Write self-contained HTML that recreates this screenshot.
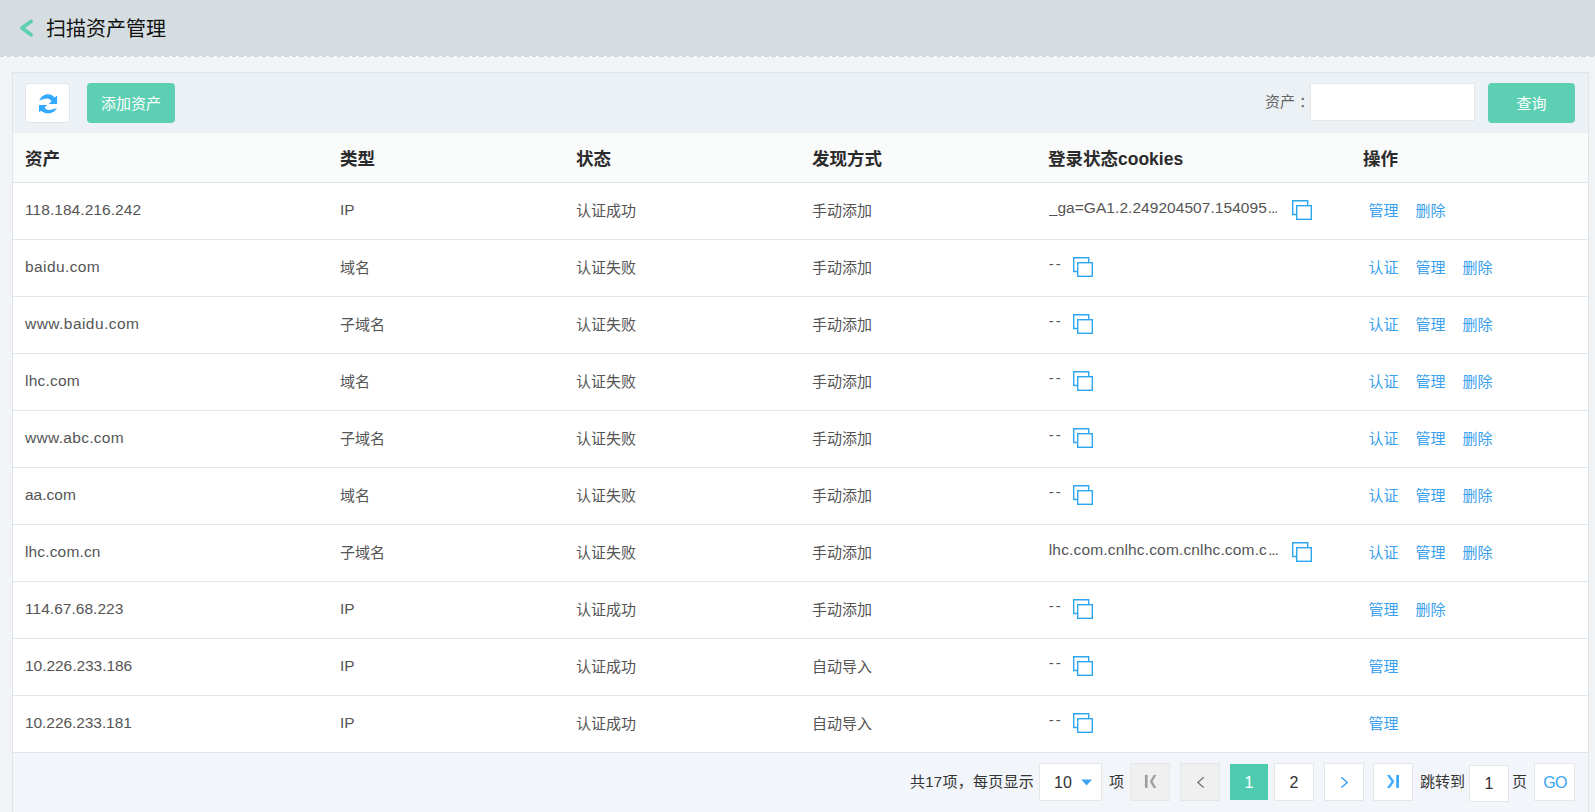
<!DOCTYPE html>
<html lang="zh-CN">
<head>
<meta charset="utf-8">
<title>扫描资产管理</title>
<style>
*{box-sizing:border-box;margin:0;padding:0}
html,body{width:1595px;height:812px;overflow:hidden}
body{background:#f2f3f5;font-family:"Liberation Sans","Noto Sans CJK SC",sans-serif;font-size:14px;color:#555;position:relative}
.hdr{position:absolute;left:0;top:0;width:1595px;height:56px;background:#d6dde1}
.dash{position:absolute;left:-1.5px;top:56px;width:1600px;height:1px;background:repeating-linear-gradient(90deg,#cbd5df 0,#cbd5df 4.8px,#f8f9fa 4.8px,#f8f9fa 7.5px)}
.hdr svg{position:absolute;left:19px;top:18px}
.hdr h1{position:absolute;left:46px;top:14px;font-size:20px;line-height:30px;font-weight:400;color:#111}
.panel{position:absolute;left:12px;top:72px;width:1577px;height:760px;border:1px solid #dfe4ea;background:#f2f5f9}
.tool{position:absolute;left:0;top:0;width:1575px;height:60px;background:#ecf1f6}
.btn-ref{position:absolute;left:12px;top:10px;width:45px;height:40px;background:#fff;border:1px solid #dfe5eb;border-radius:4px}
.btn-ref svg{position:absolute;left:0;top:0}
.btn-add{position:absolute;left:74px;top:10px;width:88px;height:40px;background:#5dd0b3;border-radius:4px;color:#fff;font-size:15px;line-height:42px;text-align:center}
.lbl{position:absolute;left:1252px;top:19px;font-size:15px;line-height:20px;color:#666}
.lbl span{position:relative;left:4px}
.inp{position:absolute;left:1297px;top:10px;width:165px;height:38px;background:#fff;border:1px solid #e6e6e6}
.btn-q{position:absolute;left:1475px;top:10px;width:87px;height:40px;background:#5dd0b3;border-radius:4px;color:#fff;font-size:15px;line-height:42px;text-align:center}
table{position:absolute;left:0;top:60px;width:1575px;border-collapse:collapse;table-layout:fixed;background:#fff}
th{height:49px;background:#f9fafa;border-bottom:1px solid #dfe6ec;text-align:left;padding-left:12px;font-size:17.5px;font-weight:700;color:#2b2b2b}
td{height:57px;border-bottom:1px solid #dfe6ec;padding-left:12px;padding-bottom:2px;font-size:15px;color:#555;white-space:nowrap;vertical-align:middle}
td.lt,.ck{font-size:15.5px}
.el{letter-spacing:-1.1px;margin-left:1px}
.ck{display:inline-block;vertical-align:middle;margin-left:.75px;max-width:231px;overflow:hidden;text-overflow:ellipsis;white-space:nowrap;letter-spacing:.25px;position:relative;top:-2px}
.cp{display:inline-block;vertical-align:middle;margin-left:14.5px;width:20px;height:20px;position:relative;top:0}
.cp svg{display:block}
.ck.dd{letter-spacing:1.9px;margin-right:-1.9px;top:-3px;font-size:15px}
.dd+.cp{top:.5px;margin-left:12.3px}
a{color:#39a0ed;text-decoration:none;display:inline-block;margin-left:5.5px;margin-right:11.5px}
.pg{position:absolute;left:0;top:680px;width:1575px;height:80px;background:#f2f5f9;font-size:15px;color:#333}
.pg span,.pg div{position:absolute}
.pg .t{top:19px;line-height:20px}
.bx{top:10px;height:38px;width:40px;border:1px solid #e6e6e6;background:#fff;text-align:center;line-height:38px;font-size:16px;color:#333}
.bx.dis{background:#f0f0f0;border-color:#e6e6e6}
.bx.on{background:#4fccb0;border-color:#4fccb0;color:#fff}
.bx svg{position:absolute;left:0;top:0}
</style>
</head>
<body>
<div class="hdr">
  <svg width="16" height="20" viewBox="0 0 16 20"><path d="M12 3.4 L3 10.1 L12 16.8" fill="none" stroke="#5dd0b3" stroke-width="3.8" stroke-linecap="round" stroke-linejoin="round"/></svg>
  <h1>扫描资产管理</h1>
</div>
<div class="dash"></div>
<div class="panel">
  <div class="tool">
    <div class="btn-ref"><svg width="43" height="38" viewBox="26 84 43 38"><g fill="#33aaff"><path id="rf" d="M39.2 100.6 C40.8 96.6 44.3 94.2 47.9 94.2 C50.6 94.2 53 95.4 54.8 97.5 L57.1 95.6 L57.1 104.1 L48.7 104.1 L51.5 101.6 C50.5 99.6 49 98.4 47.4 98.4 C44.6 98.4 42 99.4 39.2 100.6 Z"/><path transform="translate(0 113.5) scale(1 .85) translate(0 -113.5) rotate(180 48.05 103.85)" d="M39.2 100.6 C40.8 96.6 44.3 94.2 47.9 94.2 C50.6 94.2 53 95.4 54.8 97.5 L57.1 95.6 L57.1 104.1 L48.7 104.1 L51.5 101.6 C50.5 99.6 49 98.4 47.4 98.4 C44.6 98.4 42 99.4 39.2 100.6 Z"/></g></svg></div>
    <div class="btn-add">添加资产</div>
    <div class="lbl">资产<span>：</span></div>
    <div class="inp"></div>
    <div class="btn-q">查询</div>
  </div>
  <table>
    <colgroup><col style="width:315px"><col style="width:236px"><col style="width:236px"><col style="width:236px"><col style="width:315px"><col style="width:237px"></colgroup>
    <thead><tr><th>资产</th><th>类型</th><th>状态</th><th>发现方式</th><th>登录状态cookies</th><th>操作</th></tr></thead>
    <tbody>
      <tr><td class="lt" style="letter-spacing:0.06px">118.184.216.242</td><td class="lt">IP</td><td>认证成功</td><td>手动添加</td><td><span class="ck" style="letter-spacing:.05px">_ga=GA1.2.249204507.154095<span class="el">...</span></span><span class="cp"><svg width="20" height="20" viewBox="0 0 20 20"><path d="M4 14.5 H0.7 V0.7 H15.7 V5" fill="none" stroke="#2ea6f0" stroke-width="1.4"/><rect x="4.7" y="5.7" width="14.6" height="13.6" fill="none" stroke="#2ea6f0" stroke-width="1.4"/></svg></span></td><td><a>管理</a><a>删除</a></td></tr>
      <tr><td class="lt" style="letter-spacing:0.4px">baidu.com</td><td>域名</td><td>认证失败</td><td>手动添加</td><td><span class="ck dd">--</span><span class="cp"><svg width="20" height="20" viewBox="0 0 20 20"><path d="M4 14.5 H0.7 V0.7 H15.7 V5" fill="none" stroke="#2ea6f0" stroke-width="1.4"/><rect x="4.7" y="5.7" width="14.6" height="13.6" fill="none" stroke="#2ea6f0" stroke-width="1.4"/></svg></span></td><td><a>认证</a><a>管理</a><a>删除</a></td></tr>
      <tr><td class="lt" style="letter-spacing:0.45px">www.baidu.com</td><td>子域名</td><td>认证失败</td><td>手动添加</td><td><span class="ck dd">--</span><span class="cp"><svg width="20" height="20" viewBox="0 0 20 20"><path d="M4 14.5 H0.7 V0.7 H15.7 V5" fill="none" stroke="#2ea6f0" stroke-width="1.4"/><rect x="4.7" y="5.7" width="14.6" height="13.6" fill="none" stroke="#2ea6f0" stroke-width="1.4"/></svg></span></td><td><a>认证</a><a>管理</a><a>删除</a></td></tr>
      <tr><td class="lt" style="letter-spacing:0.22px">lhc.com</td><td>域名</td><td>认证失败</td><td>手动添加</td><td><span class="ck dd">--</span><span class="cp"><svg width="20" height="20" viewBox="0 0 20 20"><path d="M4 14.5 H0.7 V0.7 H15.7 V5" fill="none" stroke="#2ea6f0" stroke-width="1.4"/><rect x="4.7" y="5.7" width="14.6" height="13.6" fill="none" stroke="#2ea6f0" stroke-width="1.4"/></svg></span></td><td><a>认证</a><a>管理</a><a>删除</a></td></tr>
      <tr><td class="lt" style="letter-spacing:0.31px">www.abc.com</td><td>子域名</td><td>认证失败</td><td>手动添加</td><td><span class="ck dd">--</span><span class="cp"><svg width="20" height="20" viewBox="0 0 20 20"><path d="M4 14.5 H0.7 V0.7 H15.7 V5" fill="none" stroke="#2ea6f0" stroke-width="1.4"/><rect x="4.7" y="5.7" width="14.6" height="13.6" fill="none" stroke="#2ea6f0" stroke-width="1.4"/></svg></span></td><td><a>认证</a><a>管理</a><a>删除</a></td></tr>
      <tr><td class="lt" style="letter-spacing:0px">aa.com</td><td>域名</td><td>认证失败</td><td>手动添加</td><td><span class="ck dd">--</span><span class="cp"><svg width="20" height="20" viewBox="0 0 20 20"><path d="M4 14.5 H0.7 V0.7 H15.7 V5" fill="none" stroke="#2ea6f0" stroke-width="1.4"/><rect x="4.7" y="5.7" width="14.6" height="13.6" fill="none" stroke="#2ea6f0" stroke-width="1.4"/></svg></span></td><td><a>认证</a><a>管理</a><a>删除</a></td></tr>
      <tr><td class="lt" style="letter-spacing:0.15px">lhc.com.cn</td><td>子域名</td><td>认证失败</td><td>手动添加</td><td><span class="ck" style="letter-spacing:.16px">lhc.com.cnlhc.com.cnlhc.com.c<span class="el">...</span></span><span class="cp"><svg width="20" height="20" viewBox="0 0 20 20"><path d="M4 14.5 H0.7 V0.7 H15.7 V5" fill="none" stroke="#2ea6f0" stroke-width="1.4"/><rect x="4.7" y="5.7" width="14.6" height="13.6" fill="none" stroke="#2ea6f0" stroke-width="1.4"/></svg></span></td><td><a>认证</a><a>管理</a><a>删除</a></td></tr>
      <tr><td class="lt" style="letter-spacing:0.03px">114.67.68.223</td><td class="lt">IP</td><td>认证成功</td><td>手动添加</td><td><span class="ck dd">--</span><span class="cp"><svg width="20" height="20" viewBox="0 0 20 20"><path d="M4 14.5 H0.7 V0.7 H15.7 V5" fill="none" stroke="#2ea6f0" stroke-width="1.4"/><rect x="4.7" y="5.7" width="14.6" height="13.6" fill="none" stroke="#2ea6f0" stroke-width="1.4"/></svg></span></td><td><a>管理</a><a>删除</a></td></tr>
      <tr><td class="lt" style="letter-spacing:-0.04px">10.226.233.186</td><td class="lt">IP</td><td>认证成功</td><td>自动导入</td><td><span class="ck dd">--</span><span class="cp"><svg width="20" height="20" viewBox="0 0 20 20"><path d="M4 14.5 H0.7 V0.7 H15.7 V5" fill="none" stroke="#2ea6f0" stroke-width="1.4"/><rect x="4.7" y="5.7" width="14.6" height="13.6" fill="none" stroke="#2ea6f0" stroke-width="1.4"/></svg></span></td><td><a>管理</a></td></tr>
      <tr><td class="lt" style="letter-spacing:-0.07px">10.226.233.181</td><td class="lt">IP</td><td>认证成功</td><td>自动导入</td><td><span class="ck dd">--</span><span class="cp"><svg width="20" height="20" viewBox="0 0 20 20"><path d="M4 14.5 H0.7 V0.7 H15.7 V5" fill="none" stroke="#2ea6f0" stroke-width="1.4"/><rect x="4.7" y="5.7" width="14.6" height="13.6" fill="none" stroke="#2ea6f0" stroke-width="1.4"/></svg></span></td><td><a>管理</a></td></tr>
    </tbody>
  </table>
  <div class="pg">
    <span class="t" style="left:897px;letter-spacing:.25px">共17项，每页显示</span>
    <div class="bx" style="left:1026px;width:63px;text-align:left;padding-left:14px">10<svg width="61" height="36" viewBox="-1 0 61 36"><path d="M40.3 15.6 L51 15.6 L45.6 21.6 Z" fill="#3aa4f2"/></svg></div>
    <span class="t" style="left:1096px">项</span>
    <div class="bx dis" style="left:1117px"><svg width="38" height="36" viewBox="0 0 38 36"><path d="M15.25 10.9 V23.9" fill="none" stroke="#9c9c9c" stroke-width="2.6"/><path d="M25.4 11 L22.6 11 L18.8 17.45 L22.6 23.9 L25.4 23.9 L21.6 17.45 Z" fill="#a0a0a0"/></svg></div>
    <div class="bx dis" style="left:1167px"><svg width="38" height="36" viewBox="0 0 38 36"><path d="M22.7 13.3 L16.9 18.45 L22.7 23.6" fill="none" stroke="#777" stroke-width="1.4"/></svg></div>
    <div class="bx on" style="left:1217px;width:38px;top:11px;height:36px;line-height:36px">1</div>
    <div class="bx" style="left:1261px">2</div>
    <div class="bx" style="left:1311px"><svg width="38" height="36" viewBox="0 0 38 36"><path d="M16.4 13.3 L22.2 18.45 L16.4 23.6" fill="none" stroke="#3a9cf5" stroke-width="1.4"/></svg></div>
    <div class="bx" style="left:1360px"><svg width="38" height="36" viewBox="0 0 38 36"><path d="M23.6 11 V23.9" fill="none" stroke="#33a8fb" stroke-width="2.7"/><path d="M12.9 11 L15.9 11 L20.4 17.45 L15.9 23.9 L12.9 23.9 L17.4 17.45 Z" fill="#42aefc"/></svg></div>
    <span class="t" style="left:1407px">跳转到</span>
    <div class="bx" style="left:1456px;top:12px;height:37px;line-height:35px">1</div>
    <span class="t" style="left:1499px">页</span>
    <div class="bx" style="left:1521px;width:41px;color:#3aa4f2;font-size:16px;letter-spacing:-.8px;padding-left:1px">GO</div>
  </div>
</div>
</body>
</html>
